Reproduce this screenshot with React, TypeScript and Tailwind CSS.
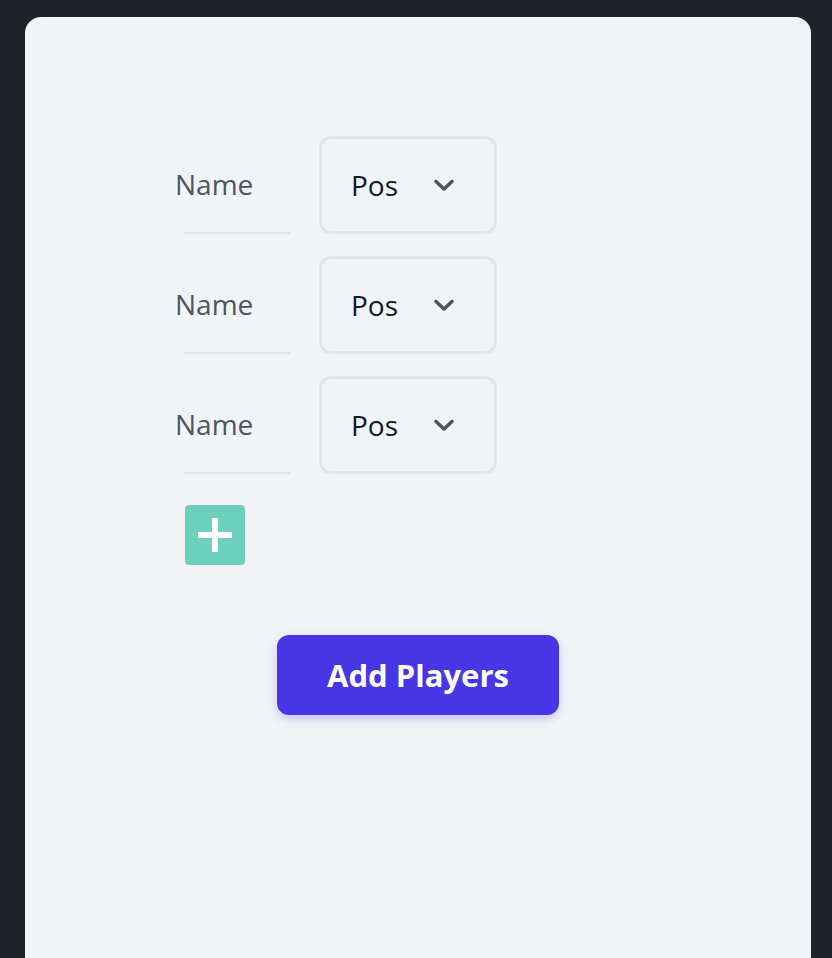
import React from 'react';

function PlayerRow() {
  return (
    <div className="flex items-start">
      <div className="flex w-[144px] flex-col">
        <span className="pt-[30px] text-[28px] leading-[36px] text-[#4b5563]">Name</span>
        <div className="ml-[9px] mt-[30px] h-[2px] w-[107px] bg-[#e2e4e8]" />
      </div>
      <div className="flex h-[98px] w-[178px] items-center justify-between rounded-[12px] border-[3px] border-[#e3e5e9] pl-[29px] pr-[38px]">
        <span className="text-[28px] text-[#111827]">Pos</span>
        <svg width="24" height="24" viewBox="0 0 24 24" fill="none" stroke="#4b5563" strokeWidth="3.6" strokeLinecap="round" strokeLinejoin="round">
          <path d="M4 8.5l8 7.5 8-7.5" />
        </svg>
      </div>
    </div>
  );
}

export default function App() {
  return (
    <div className="min-h-[958px] bg-[#1f2328] px-[25px] pt-[17px]" style={{ fontFamily: '"Open Sans", "Noto Sans", sans-serif' }}>
      <div className="min-h-[941px] w-[786px] rounded-t-[16px] bg-[#f3f4f7] pt-[119px]">
        <div className="flex flex-col gap-[22px] pl-[150px]">
          <PlayerRow />
          <PlayerRow />
          <PlayerRow />
        </div>
        <div className="pl-[160px] pt-[31px]">
          <button className="flex h-[60px] w-[60px] items-center justify-center rounded-[4px] bg-[#6dd0be]">
            <svg width="36" height="36" viewBox="0 0 36 36">
              <rect x="15" y="1" width="6" height="34" fill="white" />
              <rect x="1" y="15" width="34" height="6" fill="white" />
            </svg>
          </button>
        </div>
        <div className="flex justify-center pt-[70px]">
          <button className="h-[80px] w-[282px] rounded-[12px] bg-[#4636e5] text-[31px] font-bold text-white shadow-[0_4px_10px_rgba(70,54,229,0.25)]">
            Add Players
          </button>
        </div>
      </div>
    </div>
  );
}
